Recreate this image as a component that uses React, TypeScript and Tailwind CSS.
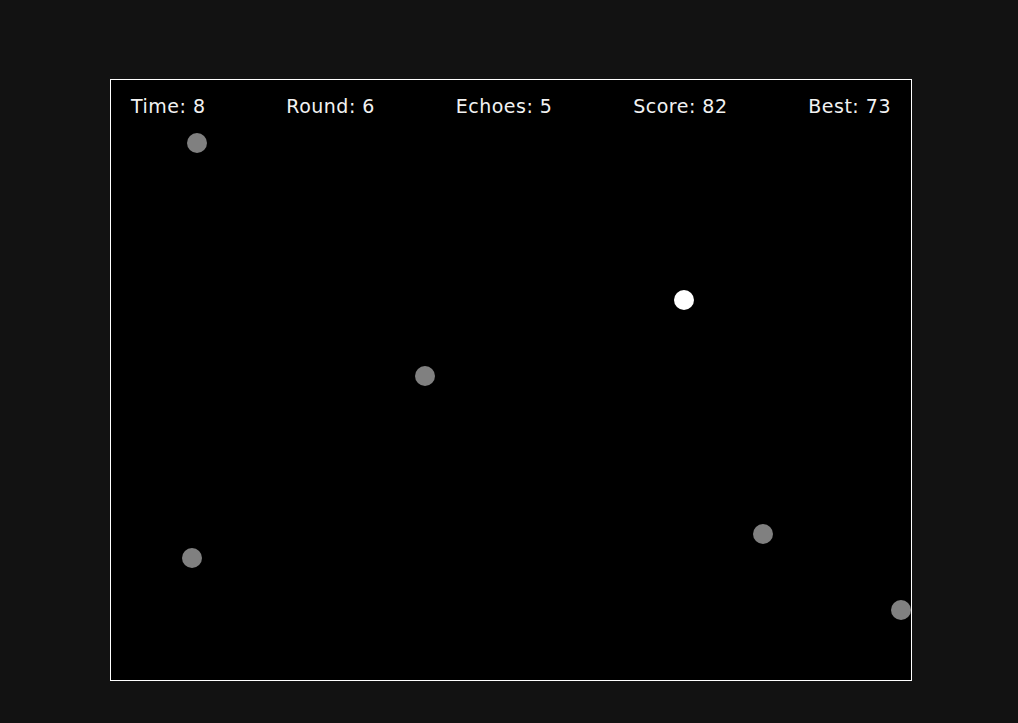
import React from "react";

const hud = [
  { label: "Time", value: 8 },
  { label: "Round", value: 6 },
  { label: "Echoes", value: 5 },
  { label: "Score", value: 82 },
  { label: "Best", value: 73 },
];

// positions inside the 800x600 field (centres)
const dots = [
  { x: 85.5, y: 62.5, player: false },
  { x: 572.5, y: 220, player: true },
  { x: 313.5, y: 295.5, player: false },
  { x: 80.5, y: 477.5, player: false },
  { x: 651.5, y: 453.5, player: false },
  { x: 789.5, y: 529.5, player: false },
];

const App = () => {
  return (
    <div className="min-h-screen bg-[#121212] pt-[79px] pl-[110px]">
      <div className="relative w-[802px] h-[602px] border border-white bg-black">
        <div
          className="flex justify-between px-5 pt-[17px] text-[19px] leading-none tracking-[0.5px] text-[#f2f2f2]"
          style={{ fontFamily: '"DejaVu Sans", sans-serif' }}
        >
          {hud.map((item, i) => (
            <span key={i}>
              {item.label}: {item.value}
            </span>
          ))}
        </div>
        {dots.map((d, i) => (
          <div
            key={i}
            className={
              d.player
                ? "absolute w-5 h-5 rounded-full bg-white"
                : "absolute w-5 h-5 rounded-full bg-[#808080]"
            }
            style={{ left: d.x - 10, top: d.y - 10 }}
          />
        ))}
      </div>
    </div>
  );
};

export default App;
